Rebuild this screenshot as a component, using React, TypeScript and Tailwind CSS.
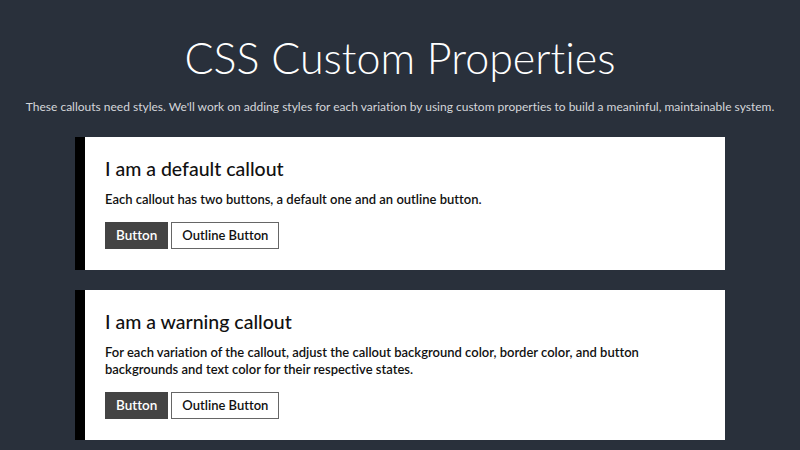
export default function App() {
  const body = { fontFamily: 'Lato, "Noto Sans", sans-serif', fontVariantLigatures: 'none' as const };
  return (
    <div className="w-[800px] h-[450px] overflow-hidden bg-[#29303b] flex flex-col items-center" style={body}>
      <h1 className="mt-[30px] text-[43px] leading-[56px] font-light text-white">
        CSS Custom Properties
      </h1>
      <p className="mt-[12px] text-[12px] leading-[18px] text-[#d4d6da] whitespace-nowrap">
        These callouts need styles. We'll work on adding styles for each variation by using custom properties to build a meaninful, maintainable system.
      </p>
      <div className="mt-[21px] w-[650px] flex flex-col gap-[20px]">
        <Callout title="I am a default callout" text="Each callout has two buttons, a default one and an outline button." />
        <Callout
          title="I am a warning callout"
          text="For each variation of the callout, adjust the callout background color, border color, and button backgrounds and text color for their respective states."
        />
      </div>
    </div>
  );
}

function Callout({ title, text }: { title: string; text: string }) {
  return (
    <div className="bg-white border-l-[10px] border-black pl-[20px] pr-[20px] pt-[20px] pb-[21px] text-[#111]">
      <h2 className="text-[19.5px] leading-[24px] font-medium">{title}</h2>
      <p className="mt-[10px] text-[13px] leading-[17px] font-semibold">{text}</p>
      <div className="mt-[14px] flex gap-[3px]">
        <button className="h-[27px] px-[10px] bg-[#444] border border-[#444] text-white text-[13.5px] font-semibold">Button</button>
        <button className="h-[27px] px-[10px] bg-white border border-[#666] text-[#111] text-[13px] font-semibold">Outline Button</button>
      </div>
    </div>
  );
}
